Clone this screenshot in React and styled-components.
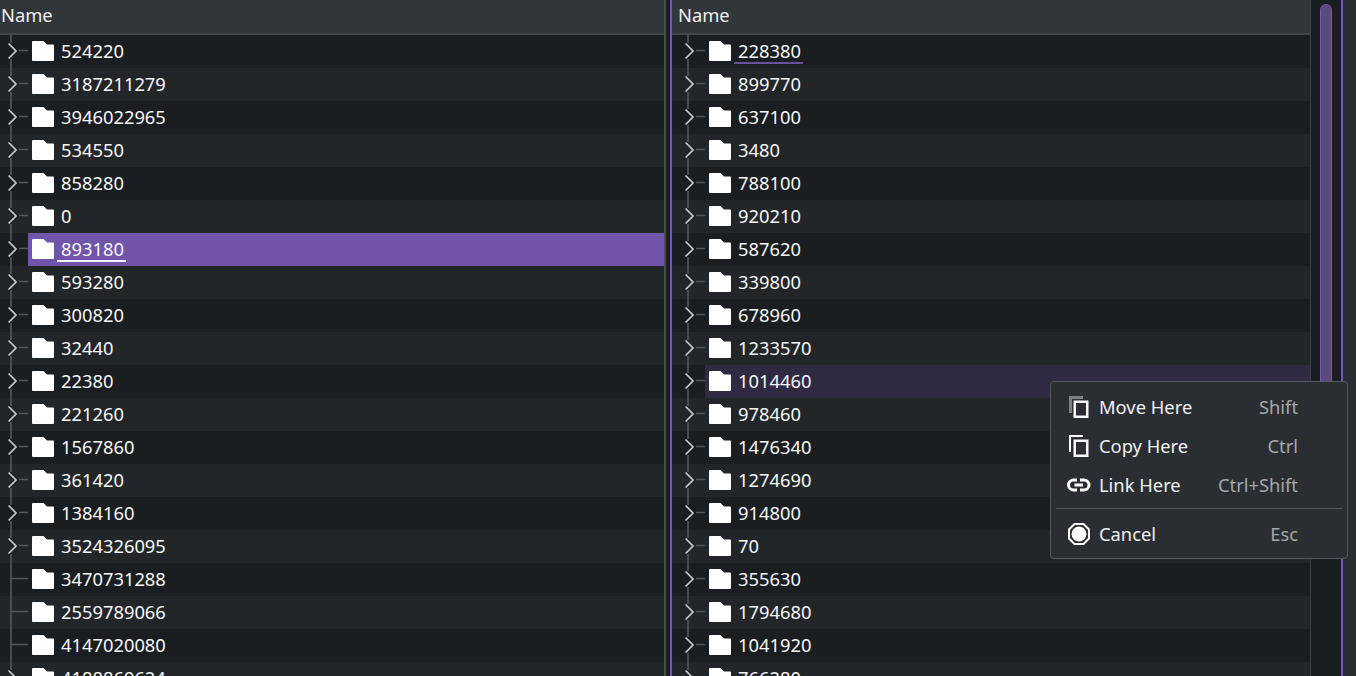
import React from "react";
import styled, { createGlobalStyle } from "styled-components";

const Global = createGlobalStyle`
  html, body { margin: 0; padding: 0; background: #232629; }
  #root { width: 1356px; height: 676px; overflow: hidden; }
  * { box-sizing: border-box; }
`;

const Window = styled.div`
  position: relative;
  display: flex;
  width: 1356px;
  height: 676px;
  overflow: hidden;
  background: #2a2e32;
  font-family: "Noto Sans", sans-serif;
  font-size: 18.33px;
  color: #f6f7f7;
`;
const Pane = styled.div`
  width: ${(p) => p.$width}px;
  flex: none;
  display: flex;
  flex-direction: column;
  overflow: hidden;
  background: #1b1e20;
`;
const Header = styled.div`
  flex: none;
  height: 35px;
  padding-left: ${(p) => p.$pad}px;
  display: flex;
  align-items: center;
  padding-bottom: 5px;
  background: #31363b;
  border-bottom: 2px solid #44484c;
  color: #eff0f1;
`;
const Row = styled.div`
  flex: none;
  height: 33px;
  display: flex;
  align-items: stretch;
  background: ${(p) => (p.$alt ? "#232629" : "#1b1e20")};
`;
const Branch = styled.svg`
  flex: none;
  width: 28px;
  height: 33px;
  margin-left: ${(p) => p.$indent}px;
`;
const Item = styled.div`
  flex: 1;
  display: flex;
  align-items: flex-start;
  padding: 6px 0 0 4px;
  background: ${(p) => (p.$state === "selected" ? "#7055aa" : p.$state === "hover" ? "#2f2a41" : "transparent")};
`;
const Folder = styled.svg`
  flex: none;
  width: 22px;
  height: 20px;
  margin-right: 7px;
`;
const Name = styled.span`
  position: relative;
  line-height: 20px;
  &::after {
    content: "";
    display: ${(p) => (p.$line ? "block" : "none")};
    position: absolute;
    left: -4px;
    right: -2px;
    top: 21px;
    height: 2px;
    background: ${(p) => p.$line};
  }
`;
const Divider = styled.div`
  flex: none;
  width: ${(p) => p.$width}px;
  background: ${(p) => p.$color};
`;
const Track = styled.div`
  flex: none;
  width: 30px;
  padding: 4px 0 0 9px;
  background: #1b1e20;
`;
const Thumb = styled.div`
  width: 12px;
  height: 500px;
  border-radius: 6px;
  background: #574a7c;
  border: 1px solid #7457b8;
`;
const Menu = styled.div`
  position: absolute;
  left: 1050px;
  top: 381px;
  width: 298px;
  height: 178px;
  padding: 5px 5px;
  border: 1px solid #55585c;
  border-radius: 4px;
  background: #2a2e32;
`;
const MenuRow = styled.div`
  display: flex;
  align-items: center;
  height: 39px;
  padding-left: 11px;
  padding-right: 44px;
  color: #f0f1f2;
`;
const MenuIcon = styled.svg`
  flex: none;
  width: 24px;
  height: 24px;
  margin-right: 8px;
`;
const Shortcut = styled.span`
  margin-left: auto;
  color: #a4a8ab;
`;
const Sep = styled.div`
  height: 1px;
  margin: 4px 0 5px;
  background: #55585c;
`;

const left = ["524220","3187211279","3946022965","534550","858280","0","893180","593280","300820","32440","22380","221260","1567860","361420","1384160","3524326095","3470731288","2559789066","4147020080","4188869624"];
const right = ["228380","899770","637100","3480","788100","920210","587620","339800","678960","1233570","1014460","978460","1476340","1274690","914800","70","355630","1794680","1041920","766280"];

function BranchIcon({ expandable, indent }) {
  return (
    <Branch $indent={indent} viewBox="0 0 28 33">
      {expandable ? (
        <>
          <path d="M11 0V8M11 24V33M19 15.5H28" stroke="#54585b" strokeWidth="1.6" fill="none" />
          <path d="M8.6 8.5L16 16L8.6 23.5" stroke="#c8cacc" strokeWidth="1.7" fill="none" />
        </>
      ) : (
        <path d="M11 0V33M11 15.5H28" stroke="#54585b" strokeWidth="1.6" fill="none" />
      )}
    </Branch>
  );
}

const FolderIcon = () => (
  <Folder viewBox="0 0 22 20">
    <path d="M1 0H11.5L15 3.5H21A1 1 0 0 1 22 4.5V19A1 1 0 0 1 21 20H1A1 1 0 0 1 0 19V1A1 1 0 0 1 1 0Z" fill="#fff" />
  </Folder>
);

function Tree({ names, width, pad, indent, stateOf, lineOf }) {
  return (
    <Pane $width={width}>
      <Header $pad={pad}>Name</Header>
      {names.map((n, i) => (
        <Row key={n} $alt={i % 2 === 1}>
          <BranchIcon indent={indent} expandable={!(names === left && i >= 16 && i <= 18)} />
          <Item $state={stateOf(i)}>
            <FolderIcon />
            <Name $line={lineOf(i)}>{n}</Name>
          </Item>
        </Row>
      ))}
    </Pane>
  );
}

export default function App() {
  return (
    <Window>
      <Global />
      <Tree names={left} width={664} pad={1} indent={0}
        stateOf={(i) => (i === 6 ? "selected" : "")}
        lineOf={(i) => (i === 6 ? "#f4f0fa" : null)} />
      <Divider $width={2} $color="#4a4e51" />
      <Divider $width={4} $color="#1b1e20" />
      <Divider $width={2} $color="#7457b8" />
      <Tree names={right} width={638} pad={6} indent={5}
        stateOf={(i) => (i === 10 ? "hover" : "")}
        lineOf={(i) => (i === 0 ? "#6a519f" : null)} />
      <Divider $width={1} $color="#3a3e42" />
      <Track><Thumb /></Track>
      <Divider $width={2} $color="#7457b8" />
      <Menu>
        <MenuRow>
          <MenuIcon viewBox="0 0 24 24">
            <path d="M2 1H16V4H5V18H2Z" fill="#7d7f81" />
            <path d="M6.5 5.5H21.5V23H6.5Z M9 8V20.5H19V8Z" fill="#fcfcfc" fillRule="evenodd" />
          </MenuIcon>
          Move Here<Shortcut>Shift</Shortcut>
        </MenuRow>
        <MenuRow>
          <MenuIcon viewBox="0 0 24 24">
            <path d="M2 1H16V3H4V18H2Z" fill="#fcfcfc" />
            <path d="M6.5 5.5H21.5V23H6.5Z M9 8V20.5H19V8Z" fill="#fcfcfc" fillRule="evenodd" />
          </MenuIcon>
          Copy Here<Shortcut>Ctrl</Shortcut>
        </MenuRow>
        <MenuRow>
          <MenuIcon viewBox="0 0 24 24">
            <path d="M10 7H6.5A5 5 0 0 0 6.5 17H10M13 7H17A5 5 0 0 1 17 17H13M7.5 12H16" stroke="#fcfcfc" strokeWidth="3" fill="none" />
          </MenuIcon>
          Link Here<Shortcut>Ctrl+Shift</Shortcut>
        </MenuRow>
        <Sep />
        <MenuRow>
          <MenuIcon viewBox="0 0 24 24">
            <path d="M7.5 2H16.5L22 7.5V16.5L16.5 22H7.5L2 16.5V7.5Z" fill="none" stroke="#fcfcfc" strokeWidth="2" />
            <circle cx="12" cy="12" r="7.5" fill="#fcfcfc" />
          </MenuIcon>
          Cancel<Shortcut>Esc</Shortcut>
        </MenuRow>
      </Menu>
    </Window>
  );
}
